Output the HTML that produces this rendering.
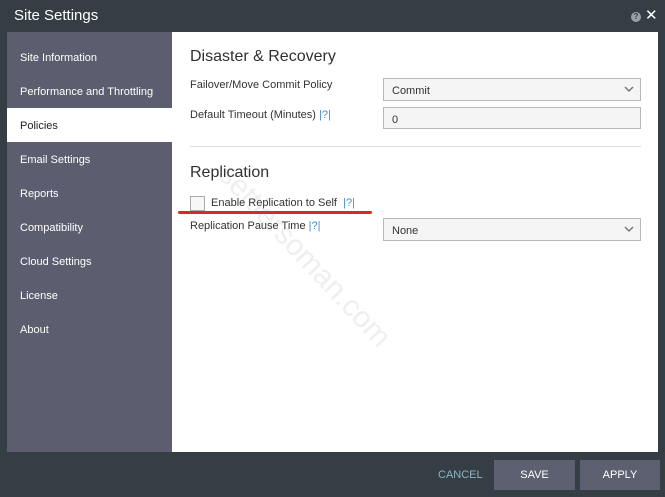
<!DOCTYPE html>
<html><head><meta charset="utf-8"><style>
body{margin:0;width:665px;height:497px;background:#363e45;font-family:"Liberation Sans",sans-serif;position:relative;overflow:hidden}
.t{position:absolute;left:14px;top:7px;color:#fff;font-size:15px}
.side{position:absolute;left:7px;top:32px;width:165px;height:420px;background:#5c5e6f}
.side div{position:absolute;left:13px;color:#fff;font-size:11px}
.sel{position:absolute;left:7px;top:108px;width:165px;height:34px;background:#fff}
.main{position:absolute;left:172px;top:32px;width:486px;height:420px;background:#fff}
.a{position:absolute;color:#333;font-size:11px}
.h{position:absolute;color:#2f3033;font-size:16px}
.box{position:absolute;border:1px solid #b8b8b8;background:#f5f5f5;font-size:11px;color:#333;box-sizing:border-box;padding:6px 8px}
.q{color:#4a90c0}
.btn{position:absolute;top:460px;height:30px;background:#5d6070;color:#fff;font-size:11px;text-align:center;line-height:30px}
.chev{position:absolute;right:6px;top:7px}
</style></head><body>
<div class="t">Site Settings</div>
<div style="position:absolute;left:631px;top:12px;width:10px;height:10px;border-radius:50%;background:#9aa0a6;color:#363e45;font-size:8px;text-align:center;line-height:10px;font-weight:bold">?</div>
<div style="position:absolute;left:645px;top:6px;color:#fff;font-size:15px">✕</div>
<div class="side">
<div style="top:20px">Site Information</div>
<div style="top:54px">Performance and Throttling</div>
<div style="top:122px">Email Settings</div>
<div style="top:156px">Reports</div>
<div style="top:190px">Compatibility</div>
<div style="top:224px">Cloud Settings</div>
<div style="top:258px">License</div>
<div style="top:292px">About</div>
</div>
<div class="sel"></div>
<div class="a" style="left:20px;top:120px;color:#222">Policies</div>
<div class="main"></div>
<div class="h" style="left:190px;top:48px">Disaster &amp; Recovery</div>
<div class="a" style="left:190px;top:79px">Failover/Move Commit Policy</div>
<div class="a" style="left:190px;top:109px">Default Timeout (Minutes) <span class="q">|?|</span></div>
<div class="box" style="left:383px;top:78px;width:258px;height:23px">Commit<svg class="chev" width="10" height="7"><path d="M1 1L5 5L9 1" stroke="#777" stroke-width="1.5" fill="none"/></svg></div>
<div class="box" style="left:383px;top:107px;width:258px;height:22px">0</div>
<div style="position:absolute;left:190px;top:146px;width:451px;height:1px;background:#ddd"></div>
<div class="h" style="left:190px;top:164px">Replication</div>
<div style="position:absolute;left:190px;top:196px;width:13px;height:13px;border:1px solid #aaa;background:#f7f7f7"></div>
<div class="a" style="left:211px;top:197px">Enable Replication to Self &nbsp;<span class="q">|?|</span></div>
<div style="position:absolute;left:178px;top:211px;width:194px;height:3px;background:#d42a2a;border-radius:2px"></div>
<div class="a" style="left:190px;top:220px">Replication Pause Time <span class="q">|?|</span></div>
<div class="box" style="left:383px;top:218px;width:258px;height:23px">None<svg class="chev" width="10" height="7"><path d="M1 1L5 5L9 1" stroke="#777" stroke-width="1.5" fill="none"/></svg></div>
<div style="position:absolute;left:236px;top:158px;transform:rotate(47deg);transform-origin:0 0;color:rgba(120,120,120,0.12);font-size:30px;white-space:nowrap">settlersoman.com</div>
<div style="position:absolute;left:438px;top:469px;color:#8fb3c4;font-size:11px">CANCEL</div>
<div class="btn" style="left:494px;width:81px">SAVE</div>
<div class="btn" style="left:580px;width:80px">APPLY</div>
</body></html>
